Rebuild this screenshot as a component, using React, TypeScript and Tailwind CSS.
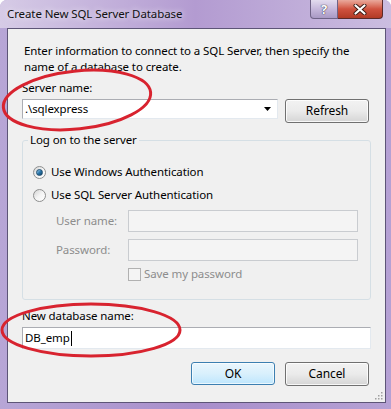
import React from "react";

// Windows 7 style "Create New SQL Server Database" dialog, with the red hand-drawn marks

const Radio = ({ checked }: { checked?: boolean }) => (
  <span className="relative flex h-[13px] w-[13px] shrink-0 items-center justify-center rounded-full border border-[#8e8f8f] bg-linear-to-br from-[#d4d4d4] via-[#f4f4f4] to-[#ffffff]">
    {checked && (
      <span className="h-[7px] w-[7px] rounded-full border border-[#1d4d6f] bg-linear-to-br from-[#9fd3f1] via-[#2b78ad] to-[#0e3f62]" />
    )}
  </span>
);

const Button = ({ label, focused }: { label: string; focused?: boolean }) => (
  <button
    className={
      focused
        ? "h-[23px] w-[84px] rounded-[3px] border border-[#3c7fb1] bg-linear-to-b from-[#eaf6fd] via-[#d9f0fc] to-[#bee6fd] text-[12px] leading-[16px] text-black shadow-[inset_0_0_0_1px_#ffffffaa]"
        : "h-[24px] w-[84px] rounded-[3px] border border-[#707070] bg-linear-to-b from-[#f2f2f2] via-[#ebebeb] to-[#d5d5d5] text-[12px] leading-[16px] text-black shadow-[inset_0_0_0_1px_#ffffffcc]"
    }
  >
    {label}
  </button>
);

export default function App() {
  return (
    <div className="relative h-[409px] w-[391px] overflow-hidden rounded-t-[7px] bg-linear-to-r from-[#b7a6d6] via-[#a88ecb] to-[#b5a1d4] font-['Noto_Sans',sans-serif] text-[11.5px] tracking-[-0.1px] text-black">
      {/* Title bar */}
      <div className="flex h-[28px] items-start justify-between bg-linear-to-r from-[#d6cbe6] via-[#b39bd1] to-[#cbbde0] pl-[7px] pr-[8px]">
        <div className="flex h-[28px] items-center leading-[16px] text-[#111] [text-shadow:0_0_6px_#ffffff]">
          Create New SQL Server Database
        </div>
        <div className="flex">
          <div className="flex h-[19px] w-[28px] items-center justify-center rounded-bl-[4px] border border-t-0 border-[#6f6386] bg-linear-to-b from-[#e3dcee] via-[#c6b8db] to-[#a999c4] text-[13px] font-bold leading-none text-white [text-shadow:0_0_1px_#2a2a3a,0_0_1px_#2a2a3a]">
            ?
          </div>
          <div className="flex h-[19px] w-[45px] items-center justify-center rounded-br-[4px] border border-l-0 border-t-0 border-[#5b2a2a] bg-linear-to-b from-[#e9a99c] via-[#d0523f] to-[#b23a25]">
            <svg width="14" height="11" viewBox="0 0 14 11">
              <path d="M2.5 1.5 L11.5 9.5 M11.5 1.5 L2.5 9.5" stroke="#3b1a14" strokeWidth="4" strokeLinecap="round" />
              <path d="M2.5 1.5 L11.5 9.5 M11.5 1.5 L2.5 9.5" stroke="#ffffff" strokeWidth="2.2" strokeLinecap="round" />
            </svg>
          </div>
        </div>
      </div>

      {/* Client area */}
      <div className="relative ml-[7px] h-[375px] w-[379px] border border-[#5d5577] bg-[#f0f0f0] px-[14px] pt-[14px] leading-[16px]">
        <p className="pl-[2px]">
          Enter information to connect to a SQL Server, then specify the
          <br />
          name of a database to create.
        </p>

        <div className="mt-[5px]">Server name:</div>
        <div className="mt-[3px] flex items-start gap-[7px]">
          <div className="flex h-[20px] w-[256px] items-center justify-between border border-[#abadb3] border-r-[#e3e9ef] border-b-[#e3e9ef] bg-white pl-[2px] pr-[6px]">
            <span>.\sqlexpress</span>
            <svg width="7" height="4" viewBox="0 0 7 4">
              <path d="M0 0 H7 L3.5 4 Z" fill="#000" />
            </svg>
          </div>
          <Button label="Refresh" />
        </div>

        <fieldset className="mt-[9px] rounded-[3px] border border-[#d5dfe5]">
          <legend className="ml-[5px] px-[2px] leading-[16px]">Log on to the server</legend>
          <div className="pb-[17px] pl-[10px] pr-[12px] pt-[16px]">
            <div className="flex h-[16px] items-center gap-[5px]">
              <Radio checked />
              <span>Use Windows Authentication</span>
            </div>
            <div className="mt-[7px] flex h-[16px] items-center gap-[5px]">
              <Radio />
              <span>Use SQL Server Authentication</span>
            </div>
            <div className="mt-[7px] flex items-center pl-[23px]">
              <span className="w-[72px] text-[#8d8d8d]">User name:</span>
              <div className="h-[22px] flex-1 border border-[#c9ccd0] bg-[#f4f4f4]" />
            </div>
            <div className="mt-[7px] flex items-center pl-[23px]">
              <span className="w-[72px] text-[#8d8d8d]">Password:</span>
              <div className="h-[22px] flex-1 border border-[#c9ccd0] bg-[#f4f4f4]" />
            </div>
            <div className="mt-[5px] flex h-[16px] items-center gap-[3px] pl-[95px]">
              <span className="h-[13px] w-[13px] border border-[#b1b1b1] bg-[#f4f4f4]" />
              <span className="text-[#8d8d8d]">Save my password</span>
            </div>
          </div>
        </fieldset>

        <div className="mt-[8px]">New database name:</div>
        <div className="mt-[3px] flex h-[22px] items-center border border-[#abadb3] border-r-[#e3e9ef] border-b-[#e3e9ef] bg-white pl-[2px]">
          <span>DB_emp</span>
          <span className="ml-[1px] h-[15px] w-[1px] bg-black" />
        </div>

        <div className="mr-[2px] mt-[13px] flex justify-end gap-[10px]">
          <Button label="OK" focused />
          <Button label="Cancel" />
        </div>

        {/* size grip */}
        <svg className="absolute bottom-[2px] right-[2px]" width="10" height="10" viewBox="0 0 10 10">
          {[
            [8, 2],
            [5, 5],
            [8, 5],
            [2, 8],
            [5, 8],
            [8, 8],
          ].map(([x, y]) => (
            <rect key={`${x}-${y}`} x={x} y={y} width="1.5" height="1.5" fill="#a0a0a0" />
          ))}
        </svg>
      </div>

      {/* red annotation marks */}
      <svg className="pointer-events-none absolute left-0 top-0" width="391" height="409" viewBox="0 0 391 409">
        <ellipse cx="77" cy="100" rx="74" ry="29" transform="rotate(-6 77 100)" fill="none" stroke="#d8232f" strokeWidth="3" />
        <ellipse cx="91" cy="330" rx="89" ry="26" fill="none" stroke="#d8232f" strokeWidth="3" />
      </svg>
    </div>
  );
}
